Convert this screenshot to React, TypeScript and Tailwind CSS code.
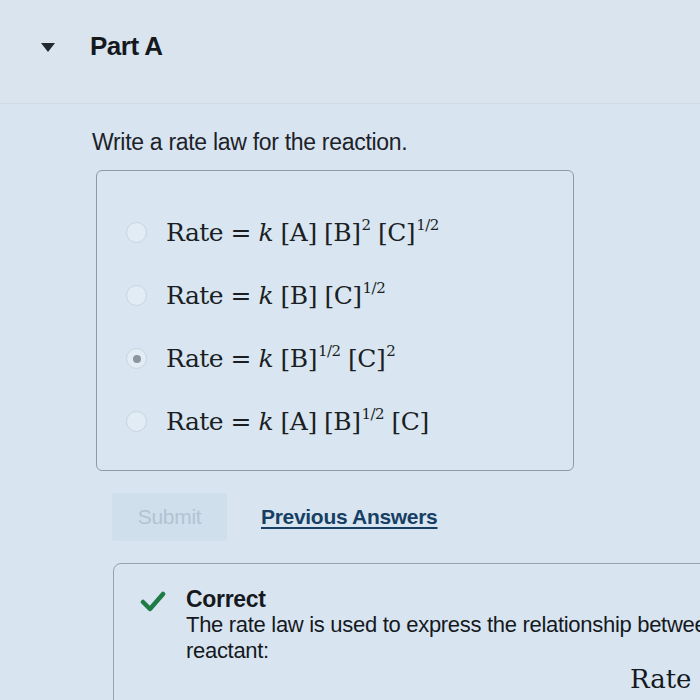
import React from 'react';

const serif = { fontFamily: "'DejaVu Serif', 'Liberation Serif', serif" };

function Sup({ children }: { children: React.ReactNode }) {
  return <sup className="-top-[11px] ml-[1px] text-[15px] leading-none">{children}</sup>;
}

function Option({ checked, children }: { checked?: boolean; children: React.ReactNode }) {
  return (
    <label className="flex h-[63px] items-center gap-[19px]">
      <span className="flex h-[21px] w-[21px] shrink-0 items-center justify-center rounded-full border border-[#c7d3de] bg-[#e2ecf5]">
        {checked && <span className="h-[8px] w-[8px] rounded-full bg-[#8a959f]" />}
      </span>
      <span className="text-[25px] leading-none tracking-[-0.5px] text-[#1b1f24]" style={serif}>
        {children}
      </span>
    </label>
  );
}

export default function App() {
  return (
    <div
      className="relative h-[700px] w-[700px] overflow-hidden bg-[#d8e5f1] text-[#15191e]"
      style={{ fontFamily: "'Liberation Sans', Arial, sans-serif" }}
    >
      {/* Header */}
      <header className="flex h-[104px] items-center gap-[35px] border-b border-[#cfdce8] bg-[#d9e4ef] pl-[41px] pb-[10px]">
        <span className="mt-[2px] h-0 w-0 border-x-[7px] border-t-[9px] border-x-transparent border-t-[#23282e]" />
        <h2 className="text-[26px] font-bold tracking-[-0.5px]">Part A</h2>
      </header>

      <main className="pl-[92px] pt-[24px]">
        <p className="text-[23px] leading-[28px] tracking-[-0.3px] text-[#1d2228]">Write a rate law for the reaction.</p>

        <div className="mt-[14px] ml-[4px] w-[478px] rounded-[6px] border border-[#8e9aa5] bg-[#d9e6f2] pl-[29px] pt-[30px] pb-[17px]">
          <Option>
            Rate = <i>k</i> [A] [B]<Sup>2</Sup> [C]<Sup>1/2</Sup>
          </Option>
          <Option>
            Rate = <i>k</i> [B] [C]<Sup>1/2</Sup>
          </Option>
          <Option checked>
            Rate = <i>k</i> [B]<Sup>1/2</Sup> [C]<Sup>2</Sup>
          </Option>
          <Option>
            Rate = <i>k</i> [A] [B]<Sup>1/2</Sup> [C]
          </Option>
        </div>

        <div className="mt-[22px] flex items-center gap-[34px] pl-[20px]">
          <button className="h-[48px] w-[115px] rounded-[3px] bg-[#d0dfec] text-[21px] tracking-[-0.3px] text-[#b3c3d1]">
            Submit
          </button>
          <a className="text-[21px] font-bold tracking-[-0.3px] text-[#173f63] underline underline-offset-[3px]">
            Previous Answers
          </a>
        </div>

        <div className="mt-[22px] ml-[21px] w-[700px] rounded-[8px] border border-[#96a3ae] bg-[#d8e5f1] pl-[26px] pt-[22px] pb-[40px]">
          <div className="flex gap-[20px]">
            <svg className="mt-[4px] h-[22px] w-[26px] shrink-0" viewBox="0 0 26 22">
              <path d="M3 12 L10 19 L23 4" fill="none" stroke="#1f7a45" strokeWidth="4.5" strokeLinecap="round" strokeLinejoin="round" />
            </svg>
            <div className="text-[22px] leading-[26px]">
              <p className="text-[23px] font-bold tracking-[-0.3px]">Correct</p>
              <p className="whitespace-nowrap tracking-[-0.3px]">
                The rate law is used to express the relationship between the rate and the
              </p>
              <p className="tracking-[-0.3px]">reactant:</p>
              <p className="mt-[2px] pl-[444px] text-[26px] whitespace-nowrap" style={serif}>
                Rate = <i>k</i> [B]<Sup>1/2</Sup> [C]<Sup>2</Sup>
              </p>
            </div>
          </div>
        </div>
      </main>
    </div>
  );
}
